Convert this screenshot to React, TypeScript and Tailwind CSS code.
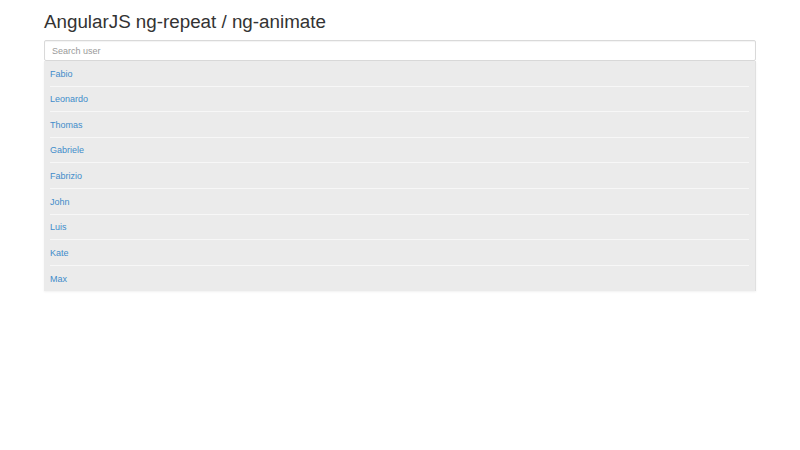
const users = ['Fabio', 'Leonardo', 'Thomas', 'Gabriele', 'Fabrizio', 'John', 'Luis', 'Kate', 'Max'];

export default function App() {
  return (
    <div className="min-h-[450px] bg-white font-['Liberation_Sans',Arial,sans-serif] text-[#333]">
      <div className="mx-[44px] pt-[10px]">
        <h1 className="text-[18.8px] leading-[24px] mb-[6px]">AngularJS ng-repeat / ng-animate</h1>

        <input
          type="text"
          placeholder="Search user"
          className="block w-full h-[21px] px-[7px] text-[9px] border border-[#d9d9d9] rounded-[2px] bg-white placeholder:text-[#999] outline-none shadow-[inset_0_1px_1px_rgba(0,0,0,0.05)]"
        />

        {/* User list */}
        <div className="bg-[#ebebeb] px-[6px] border-r border-[#e0e0e0] shadow-[0_1px_2px_rgba(0,0,0,0.06)]">
          {users.map((name, i) => (
            <div
              key={name}
              className={`h-[25.6px] pt-[2px] flex items-center text-[9px] ${
                i < users.length - 1 ? 'border-b border-[#f7f7f7]' : ''
              }`}
            >
              <a href="#" className="text-[#428bca]">
                {name}
              </a>
            </div>
          ))}
        </div>
      </div>
    </div>
  );
}
